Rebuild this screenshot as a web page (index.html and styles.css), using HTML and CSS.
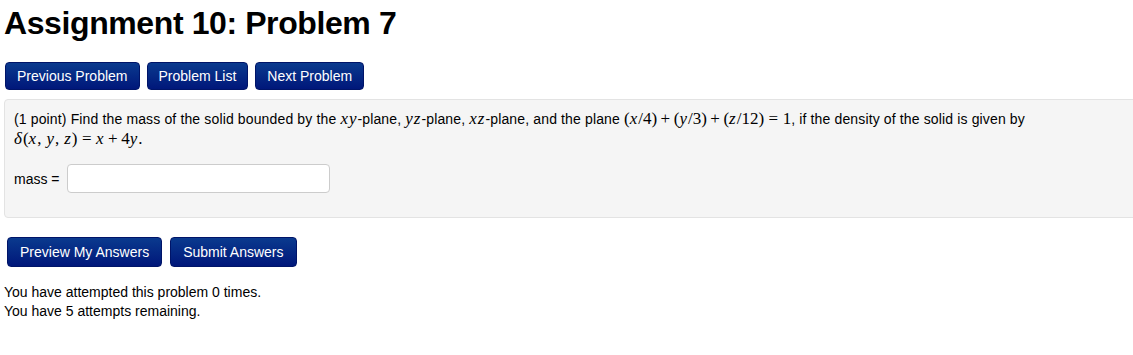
FILE: index.html
```html
<!DOCTYPE html>
<html>
<head>
<meta charset="utf-8">
<link rel="stylesheet" href="styles.css">
</head>
<body>
<div class="page">
  <h1 class="title">Assignment 10: Problem 7</h1>
  <div class="nav">
    <button class="btn btn-nav">Previous Problem</button>
    <button class="btn btn-nav">Problem List</button>
    <button class="btn btn-nav">Next Problem</button>
  </div>
  <div class="problem">
    <p class="statement">(1 point) Find the mass of the solid bounded by the <span class="m"><i>xy</i></span>-plane, <span class="m"><i>yz</i></span>-plane, <span class="m"><i>xz</i></span>-plane, and the plane <span class="m">(<i>x</i>/4)<span class="op">+</span>(<i>y</i>/3)<span class="op">+</span>(<i>z</i>/12)<span class="rel">=</span>1</span>, if the density of the solid is given by<br><span class="m"><i>δ</i>(<i>x</i>,<span class="sp"></span><i>y</i>,<span class="sp"></span><i>z</i>)<span class="rel">=</span><i>x</i><span class="op">+</span>4<i>y</i>.</span></p>
    <div class="answer">
      <label class="label">mass =</label>
      <input class="field" type="text">
    </div>
  </div>
  <div class="actions">
    <button class="btn btn-act">Preview My Answers</button>
    <button class="btn btn-act">Submit Answers</button>
  </div>
  <div class="info">
    <div>You have attempted this problem 0 times.</div>
    <div>You have 5 attempts remaining.</div>
  </div>
</div>
</body>
</html>
```
FILE: styles.css
```css
html, body {
  margin: 0;
  padding: 0;
  background: #fff;
  overflow: hidden;
}
body {
  font-family: "Liberation Sans", Arial, sans-serif;
  color: #000;
}
.page {
  padding: 0 0 0 4px;
}
.title {
  margin: 0;
  padding-top: 5px;
  font-size: 32px;
  line-height: 36px;
  font-weight: bold;
  letter-spacing: -0.4px;
}
.nav {
  display: flex;
  gap: 7px;
  margin-top: 21px;
  padding-left: 1px;
}
.btn {
  font-family: "Liberation Sans", Arial, sans-serif;
  color: #fff;
  background: linear-gradient(#0a3a8e, #00177a);
  border: 1px solid #001468;
  border-radius: 4px;
  cursor: pointer;
  margin: 0;
}
.btn-nav {
  font-size: 14px;
  height: 28px;
  padding: 0 11px;
}
.problem {
  margin-top: 9px;
  margin-right: -20px;
  background: #f5f5f5;
  border: 1px solid #e3e3e3;
  border-radius: 4px;
  padding: 9px 9px 24px 9px;
}
.statement {
  margin: 0;
  font-size: 14px;
  line-height: 20px;
  letter-spacing: 0.14px;
}
.m {
  font-family: "Liberation Serif", "Times New Roman", serif;
  font-size: 17px;
  letter-spacing: 0;
}
.m i {
  font-style: italic;
  letter-spacing: 1px;
}
.op {
  margin: 0 3.5px;
}
.rel {
  margin: 0 4.5px;
}
.sp {
  display: inline-block;
  width: 5px;
}
.answer {
  display: flex;
  align-items: center;
  gap: 7px;
  margin-top: 15px;
}
.label {
  font-size: 14px;
}
.field {
  width: 263px;
  height: 29px;
  box-sizing: border-box;
  border: 1px solid #cccccc;
  border-radius: 4px;
  background: #fff;
  margin: 0;
  padding: 4px 6px;
}
.actions {
  display: flex;
  gap: 8px;
  margin-top: 19px;
  padding-left: 3px;
}
.btn-act {
  font-size: 14px;
  height: 30px;
  padding: 0 12px;
}
.info {
  margin-top: 16px;
  font-size: 14px;
  line-height: 19px;
}
```
